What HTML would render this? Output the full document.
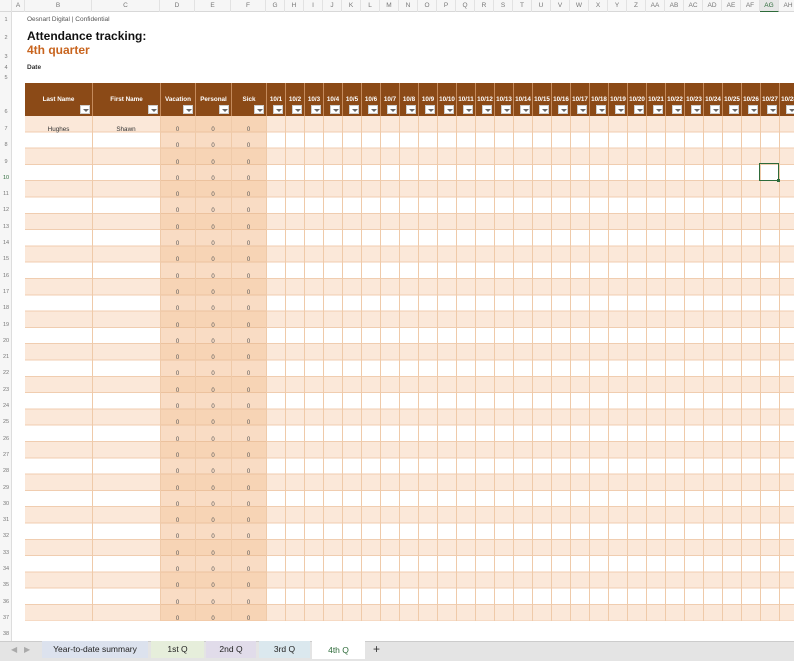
<!DOCTYPE html>
<html><head><meta charset="utf-8"><style>
*{margin:0;padding:0;box-sizing:border-box}
body{width:794px;height:661px;overflow:hidden;background:#fff;font-family:"Liberation Sans",sans-serif;position:relative}
.a{position:absolute}
.colhdr{left:0;top:0;width:794px;height:12px;background:#f6f6f6;border-bottom:1px solid #d8d8d8}
.cl{position:absolute;top:0;height:12px;font-size:6.5px;color:#777;text-align:center;line-height:12px;border-right:1px solid #e2e2e2}
.rowhdr{left:0;top:12px;width:12px;height:629px;background:#f6f6f6;border-right:1px solid #ddd}
.rn{position:absolute;left:0;width:12px;font-size:5.5px;color:#777;text-align:center}
.data{left:25px;top:116px;width:769px;height:505px;background:repeating-linear-gradient(to bottom,#fbe8d9 0,#fbe8d9 15.3px,#f0cdb0 15.3px,#f0cdb0 16.3px,#fff 16.3px,#fff 31.6px,#f0cdb0 31.6px,#f0cdb0 32.6px)}
.dfe{left:160px;top:116px;width:106px;height:505px;background:repeating-linear-gradient(to bottom,#f7d4b5 0,#f7d4b5 15.3px,#ecc29e 15.3px,#ecc29e 16.3px,#f9dcc4 16.3px,#f9dcc4 31.6px,#ecc29e 31.6px,#ecc29e 32.6px)}
.vl{position:absolute;top:116px;width:1px;height:505px;background:#efcaa9}
.hdr{left:25px;top:83px;width:769px;height:33px;background:#8b4a17}
.hc{position:absolute;top:83px;height:33px;border-left:1px solid #c48a5c;color:#fff;font-weight:bold;font-size:6.3px;text-align:center;padding-top:13px;white-space:nowrap;overflow:hidden}
.dd{position:absolute;bottom:2px;right:2px;width:10px;height:9px;background:#fff;border:1px solid #ccc}
.dd:after{content:"";position:absolute;left:2px;top:3px;border-left:3px solid transparent;border-right:3px solid transparent;border-top:3px solid #666}
.z{position:absolute;top:122px;width:35px;text-align:center;font-size:6px;color:#555;line-height:16.3px}
.tabs{left:0;top:641px;width:794px;height:20px;background:#e4e4e4;border-top:1px solid #ccc}
.tab{position:absolute;top:641px;height:17px;font-size:8.5px;text-align:center;line-height:17px;color:#222}
</style></head><body>
<div class="a colhdr">
<div class="cl" style="left:0;width:12px"></div>
<div class="cl" style="left:12px;width:13px">A</div>
<div class="cl" style="left:25px;width:67px">B</div>
<div class="cl" style="left:92px;width:68px">C</div>
<div class="cl" style="left:160px;width:35px">D</div>
<div class="cl" style="left:195px;width:36px">E</div>
<div class="cl" style="left:231px;width:35px">F</div>
<div class="cl" style="left:266px;width:19px">G</div><div class="cl" style="left:285px;width:19px">H</div><div class="cl" style="left:304px;width:19px">I</div><div class="cl" style="left:323px;width:19px">J</div><div class="cl" style="left:342px;width:19px">K</div><div class="cl" style="left:361px;width:19px">L</div><div class="cl" style="left:380px;width:19px">M</div><div class="cl" style="left:399px;width:19px">N</div><div class="cl" style="left:418px;width:19px">O</div><div class="cl" style="left:437px;width:19px">P</div><div class="cl" style="left:456px;width:19px">Q</div><div class="cl" style="left:475px;width:19px">R</div><div class="cl" style="left:494px;width:19px">S</div><div class="cl" style="left:513px;width:19px">T</div><div class="cl" style="left:532px;width:19px">U</div><div class="cl" style="left:551px;width:19px">V</div><div class="cl" style="left:570px;width:19px">W</div><div class="cl" style="left:589px;width:19px">X</div><div class="cl" style="left:608px;width:19px">Y</div><div class="cl" style="left:627px;width:19px">Z</div><div class="cl" style="left:646px;width:19px">AA</div><div class="cl" style="left:665px;width:19px">AB</div><div class="cl" style="left:684px;width:19px">AC</div><div class="cl" style="left:703px;width:19px">AD</div><div class="cl" style="left:722px;width:19px">AE</div><div class="cl" style="left:741px;width:19px">AF</div><div class="cl" style="left:760px;width:19px;color:#2e6b3a;border-bottom:1px solid #2e6b3a;background:#e6e6e6">AG</div><div class="cl" style="left:779px;width:19px">AH</div>
</div>
<div class="a rowhdr"></div>
<div class="rn" style="top:17px">1</div><div class="rn" style="top:35px">2</div><div class="rn" style="top:54px">3</div><div class="rn" style="top:65px">4</div><div class="rn" style="top:75px">5</div><div class="rn" style="top:109px">6</div>
<div class="a" style="left:0;top:121px;width:12px;font-size:5.5px;color:#777;text-align:center;line-height:16.3px">7<br>8<br>9<br><span style="color:#2e6b3a">10</span><br>11<br>12<br>13<br>14<br>15<br>16<br>17<br>18<br>19<br>20<br>21<br>22<br>23<br>24<br>25<br>26<br>27<br>28<br>29<br>30<br>31<br>32<br>33<br>34<br>35<br>36<br>37<br>38</div>

<div class="a" style="left:27px;top:16px;font-size:6.5px;color:#555">Oesnart Digital | Confidential</div>
<div class="a" style="left:27px;top:29px;font-size:12px;font-weight:bold;color:#111">Attendance tracking:</div>
<div class="a" style="left:27px;top:43px;font-size:12px;font-weight:bold;color:#c8641e">4th quarter</div>
<div class="a" style="left:27px;top:64px;font-size:6.5px;font-weight:bold;color:#333">Date</div>

<div class="a data"></div>
<div class="a dfe"></div>
<div class="vl" style="left:92px"></div><div class="vl" style="left:160px"></div><div class="vl" style="left:195px"></div><div class="vl" style="left:231px"></div><div class="vl" style="left:266px"></div>
<div class="a" style="left:285px;top:116px;width:509px;height:505px;background:repeating-linear-gradient(to right,#efcaa9 0,#efcaa9 1px,transparent 1px,transparent 19px)"></div>
<div class="a" style="left:759px;top:163px;width:20px;height:18px;border:1px solid #2e6b3a"></div>
<div class="a" style="left:777px;top:179px;width:3px;height:3px;background:#2e6b3a"></div>

<div class="a hdr"></div>
<div class="hc" style="left:25px;width:67px;border-left:none">Last Name<div class="dd"></div></div>
<div class="hc" style="left:92px;width:68px">First Name<div class="dd"></div></div>
<div class="hc" style="left:160px;width:35px">Vacation<div class="dd"></div></div>
<div class="hc" style="left:195px;width:36px">Personal<div class="dd"></div></div>
<div class="hc" style="left:231px;width:35px">Sick<div class="dd"></div></div>
<div class="hc" style="left:266px;width:19px">10/1<div class="dd"></div></div><div class="hc" style="left:285px;width:19px">10/2<div class="dd"></div></div><div class="hc" style="left:304px;width:19px">10/3<div class="dd"></div></div><div class="hc" style="left:323px;width:19px">10/4<div class="dd"></div></div><div class="hc" style="left:342px;width:19px">10/5<div class="dd"></div></div><div class="hc" style="left:361px;width:19px">10/6<div class="dd"></div></div><div class="hc" style="left:380px;width:19px">10/7<div class="dd"></div></div><div class="hc" style="left:399px;width:19px">10/8<div class="dd"></div></div><div class="hc" style="left:418px;width:19px">10/9<div class="dd"></div></div><div class="hc" style="left:437px;width:19px">10/10<div class="dd"></div></div><div class="hc" style="left:456px;width:19px">10/11<div class="dd"></div></div><div class="hc" style="left:475px;width:19px">10/12<div class="dd"></div></div><div class="hc" style="left:494px;width:19px">10/13<div class="dd"></div></div><div class="hc" style="left:513px;width:19px">10/14<div class="dd"></div></div><div class="hc" style="left:532px;width:19px">10/15<div class="dd"></div></div><div class="hc" style="left:551px;width:19px">10/16<div class="dd"></div></div><div class="hc" style="left:570px;width:19px">10/17<div class="dd"></div></div><div class="hc" style="left:589px;width:19px">10/18<div class="dd"></div></div><div class="hc" style="left:608px;width:19px">10/19<div class="dd"></div></div><div class="hc" style="left:627px;width:19px">10/20<div class="dd"></div></div><div class="hc" style="left:646px;width:19px">10/21<div class="dd"></div></div><div class="hc" style="left:665px;width:19px">10/22<div class="dd"></div></div><div class="hc" style="left:684px;width:19px">10/23<div class="dd"></div></div><div class="hc" style="left:703px;width:19px">10/24<div class="dd"></div></div><div class="hc" style="left:722px;width:19px">10/25<div class="dd"></div></div><div class="hc" style="left:741px;width:19px">10/26<div class="dd"></div></div><div class="hc" style="left:760px;width:19px">10/27<div class="dd"></div></div><div class="hc" style="left:779px;width:19px">10/28<div class="dd"></div></div>

<div class="a" style="left:25px;top:126px;width:67px;text-align:center;font-size:6.3px;color:#333">Hughes</div>
<div class="a" style="left:92px;top:126px;width:68px;text-align:center;font-size:6.3px;color:#333">Shawn</div>
<div class="z" style="left:160px">0<br>0<br>0<br>0<br>0<br>0<br>0<br>0<br>0<br>0<br>0<br>0<br>0<br>0<br>0<br>0<br>0<br>0<br>0<br>0<br>0<br>0<br>0<br>0<br>0<br>0<br>0<br>0<br>0<br>0<br>0</div>
<div class="z" style="left:195px;width:36px">0<br>0<br>0<br>0<br>0<br>0<br>0<br>0<br>0<br>0<br>0<br>0<br>0<br>0<br>0<br>0<br>0<br>0<br>0<br>0<br>0<br>0<br>0<br>0<br>0<br>0<br>0<br>0<br>0<br>0<br>0</div>
<div class="z" style="left:231px">0<br>0<br>0<br>0<br>0<br>0<br>0<br>0<br>0<br>0<br>0<br>0<br>0<br>0<br>0<br>0<br>0<br>0<br>0<br>0<br>0<br>0<br>0<br>0<br>0<br>0<br>0<br>0<br>0<br>0<br>0</div>

<div class="a tabs"></div>
<div class="a" style="left:11px;top:645px;font-size:8px;color:#aaa">◀</div>
<div class="a" style="left:24px;top:645px;font-size:8px;color:#aaa">▶</div>
<div class="tab" style="left:42px;width:106px;background:#dce2ee">Year-to-date summary</div>
<div class="tab" style="left:151px;width:53px;background:#e6eedb">1st Q</div>
<div class="tab" style="left:206px;width:50px;background:#e1dcea">2nd Q</div>
<div class="tab" style="left:259px;width:51px;background:#dbe8ee">3rd Q</div>
<div class="tab" style="left:312px;width:53px;background:#fff;color:#2e6b3a;height:19px;top:640px;line-height:20px">4th Q</div>
<div class="a" style="left:373px;top:642px;font-size:12px;color:#333">+</div>
</body></html>
